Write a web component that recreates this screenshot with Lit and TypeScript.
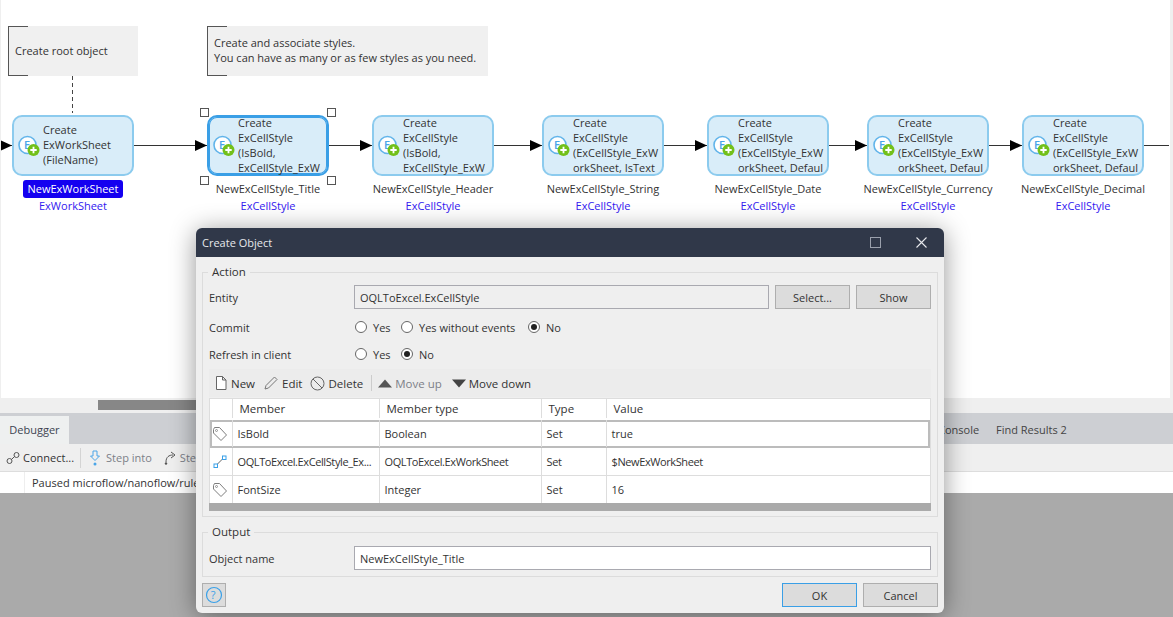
import { LitElement, html, css, svg } from "lit";
import { customElement } from "lit/decorators.js";

interface FlowNode { x: number; lines: string[]; name: string; type: string; }

const NODES: FlowNode[] = [
  { x: 12, lines: ["Create", "ExWorkSheet", "(FileName)"], name: "NewExWorkSheet", type: "ExWorkSheet" },
  { x: 207, lines: ["Create", "ExCellStyle", "(IsBold,", "ExCellStyle_ExW"], name: "NewExCellStyle_Title", type: "ExCellStyle" },
  { x: 372, lines: ["Create", "ExCellStyle", "(IsBold,", "ExCellStyle_ExW"], name: "NewExCellStyle_Header", type: "ExCellStyle" },
  { x: 542, lines: ["Create", "ExCellStyle", "(ExCellStyle_ExW", "orkSheet, IsText"], name: "NewExCellStyle_String", type: "ExCellStyle" },
  { x: 707, lines: ["Create", "ExCellStyle", "(ExCellStyle_ExW", "orkSheet, Defaul"], name: "NewExCellStyle_Date", type: "ExCellStyle" },
  { x: 867, lines: ["Create", "ExCellStyle", "(ExCellStyle_ExW", "orkSheet, Defaul"], name: "NewExCellStyle_Currency", type: "ExCellStyle" },
  { x: 1022, lines: ["Create", "ExCellStyle", "(ExCellStyle_ExW", "orkSheet, Defaul"], name: "NewExCellStyle_Decimal", type: "ExCellStyle" },
];

const FLOWS: [number, number][] = [[0, 12], [134, 207], [329, 372], [494, 542], [664, 707], [829, 867], [989, 1022], [1144, 1169]];

const tagIcon = html`<svg width="16" height="16" viewBox="0 0 16 16"><path d="M1.5 3.5 L2.5 1.5 L7.5 1.5 L14.5 9 L9 14.5 L1.5 7 Z" fill="none" stroke="#7d7d7d" stroke-width="1"/><circle cx="4.5" cy="4.5" r="1" fill="none" stroke="#7d7d7d" stroke-width=".8"/></svg>`;
const linkIcon = html`<svg width="16" height="16" viewBox="0 0 16 16"><path d="M4 11.5 L12 3.5" stroke="#666" stroke-width="1"/><rect x="2" y="10" width="3.5" height="3.5" fill="#fff" stroke="#39a0e8"/><rect x="10.5" y="2" width="3.5" height="3.5" fill="#fff" stroke="#39a0e8"/></svg>`;

const ROWS = [
  { icon: tagIcon, member: "IsBold", type: "Boolean", kind: "Set", value: "true", selected: true, long: false },
  { icon: linkIcon, member: "OQLToExcel.ExCellStyle_Ex...", type: "OQLToExcel.ExWorkSheet", kind: "Set", value: "$NewExWorkSheet", selected: false, long: true },
  { icon: tagIcon, member: "FontSize", type: "Integer", kind: "Set", value: "16", selected: false, long: false },
];

const radio = (label: string, checked = false, size = "") => html`
  <span class="radio ${size}"><span class="dot ${checked ? "on" : ""}"></span>${label}</span>`;

@customElement("app-root")
export class AppRoot extends LitElement {
  static styles = css`
    :host { display: block; width: 1173px; height: 617px; overflow: hidden; position: relative;
      font-family: "Open Sans", "Noto Sans", sans-serif; font-size: 11px; color: #333; background: #aaa; }
    * { box-sizing: border-box; }
    .page { display: flex; flex-direction: column; height: 617px; }
    .canvas-wrap { height: 413px; background: #efefef; display: flex; flex-direction: column; position: relative; }
    .canvas { position: relative; height: 398px; width: 1169px; margin-left: 1px; background: #fff; overflow: hidden; flex: none; }
    .hscroll { height: 15px; padding: 2px 0 3px 98px; }
    .thumb { height: 10px; width: 300px; background: #878787; }
    .wires { position: absolute; left: -1px; top: 0; }
    .note { position: absolute; top: 26px; height: 50px; background: #f0f0f0; display: flex; align-items: center; padding: 0 0 2px 7px; line-height: 15px; color: #333; }
    .note::before { content: ""; position: absolute; left: 0; top: 0; bottom: 0; width: 19px; border: 1px solid #555; border-right: 0; }
    .node { position: absolute; top: 115px; width: 122px; height: 61px; background: #d9edf9; border: 2px solid #8ccbee; border-radius: 10px; display: flex; align-items: center; }
    .node.sel { border-color: #3a9fe6; box-shadow: inset 0 0 0 1px #3a9fe6; }
    .node svg { position: absolute; left: 4px; top: 17px; }
    .node-text { margin-left: 29px; padding-bottom: 2px; line-height: 15px; width: 89px; white-space: nowrap; overflow: hidden; color: #333; }
    .label { position: absolute; width: 190px; text-align: center; top: 180px; line-height: 18px; color: #333; white-space: nowrap; }
    .label .name { display: inline-block; padding: 0 5px; height: 18px; }
    .label .name.hl { background: #1400f0; color: #fff; border-radius: 3px; }
    .label .type { color: #3320f0; line-height: 16px; }
    .handle { position: absolute; width: 9px; height: 9px; border: 1px solid #555; background: #fff; }
    .tabbar { height: 31px; background: #cdcfd3; display: flex; align-items: flex-end; color: #444; position: relative; }
    .tab { height: 28px; width: 69px; background: #eef0f0; display: flex; align-items: center; justify-content: center; padding-bottom: 2px; color: #3d4450; }
    .tab-right { position: absolute; top: 1px; height: 31px; display: flex; align-items: center; }
    .dbg-tools { height: 28px; background: #efefef; border-bottom: 1px solid #ddd; display: flex; align-items: center; padding-left: 6px; white-space: nowrap; }
    .dbg-tools svg { flex: none; }
    .dbg-tools .muted { color: #7c8088; }
    .dbg-sep { width: 1px; height: 20px; background: #d4d4d4; margin: 0 8px 0 6px; }
    .i-conn { margin-right: 2px; }
    .i-into { margin-right: 5px; }
    .i-over { margin: 0 2px 0 12px; }
    .status { height: 21px; background: #fff; display: flex; align-items: center; white-space: nowrap; }
    .status-cell { width: 25px; height: 100%; border-right: 1px solid #eee; flex: none; }
    .status span { margin-left: 7px; }
    .rest { flex: 1; background: #aaa; }

    .dialog { position: absolute; left: 196px; top: 228px; width: 748px; height: 385px; background: #efefef; border-radius: 6px; box-shadow: 0 3px 26px rgba(0,0,0,.42); display: flex; flex-direction: column; overflow: hidden; }
    .titlebar { height: 29px; flex: none; background: #303849; color: #e6e8ec; display: flex; align-items: center; padding-left: 6px; }
    .titlebar .title { flex: 1; }
    .titlebar svg { display: block; }
    .win-btn { width: 46px; display: flex; justify-content: center; }
    .body { flex: 1; display: flex; flex-direction: column; padding: 7px 6px 6px; }
    fieldset { margin: 0; border: 1px solid #dcdcdc; padding: 5px 6px 5px; min-width: 0; }
    legend { padding: 0 4px; margin-left: -1px; height: 16px; line-height: 16px; font-size: 11.5px; color: #333; }
    .form-row { display: flex; align-items: center; height: 24px; }
    .form-row + .form-row { margin-top: 6px; }
    .form-row.tight { margin-top: 3px; }
    .lbl { width: 145px; flex: none; }
    .radios { display: flex; padding-left: 1px; }
    .input { height: 24px; border: 1px solid #a9a9b0; padding-left: 5px; display: flex; align-items: center; flex: 1; background: #efefef; }
    .input.white { background: #fff; }
    .btn { width: 75px; height: 24px; flex: none; border: 1px solid #aeaeae; background: #dcdcdc; display: flex; align-items: center; justify-content: center; }
    .btn.gap { margin-left: 6px; }
    .btn.default { border-color: #3a9fe6; }
    .radio { display: inline-flex; align-items: center; }
    .radio.short { width: 46px; }
    .radio.wide { width: 127px; }
    .dot { width: 12px; height: 12px; border: 1px solid #666; border-radius: 50%; background: #fff; margin-right: 6px; position: relative; flex: none; }
    .dot.on::after { content: ""; position: absolute; left: 2px; top: 2px; width: 6px; height: 6px; background: #222; border-radius: 50%; }
    .list-tools { height: 28px; margin-top: 3px; background: #ececec; display: flex; align-items: center; padding: 0 0 0 5px; white-space: nowrap; font-size: 11.5px; }
    .tool { display: inline-flex; align-items: center; gap: 3px; margin-right: 8px; }
    .tool.muted { color: #7c8088; }
    .tool-down { margin-left: 2px; }
    .tool-sep { width: 1px; height: 16px; background: #ccc; margin: 0 6px 0 0; }
    .table { width: 722px; height: 113px; margin-top: 1px; background: #fff; border: 1px solid #ddd; border-bottom: 0; display: flex; flex-direction: column; }
    .tr { display: grid; grid-template-columns: 23px 147px 162px 65px 1fr; height: 28px; border-bottom: 1px solid #ddd; position: relative; }
    .tr.head { height: 21px; border-bottom: 0; padding-bottom: 2px; }
    .tr.sel { box-shadow: inset 0 0 0 2px #bcbcbc; border-bottom: 0; padding-bottom: 1px; }
    .tr.long { letter-spacing: -0.4px; }
    .tr > div { display: flex; align-items: center; padding-left: 4.5px; border-right: 1px solid #ddd; white-space: nowrap; overflow: hidden; }
    .tr.head > div { padding-left: 6.5px; font-size: 11.5px; }
    .tr > div:last-child { border-right: 0; }
    .tr > div.ic { padding-left: 2px; }
    .tbar { height: 8px; background: #aaa; flex: none; margin: -1px -1px 0; position: relative; }
    .output { margin-top: 7px; padding-top: 6px; padding-bottom: 6px; }
    .footer { display: flex; align-items: center; margin-top: 6px; }
    .help { width: 24px; height: 24px; border: 1px solid #aeaeae; background: #dcdcdc; display: flex; align-items: center; justify-content: center; margin-right: auto; }
  `;

  private icon() {
    return svg`<svg width="30" height="24" viewBox="0 0 30 24">
      <circle cx="9.5" cy="11" r="8.5" fill="#fff" stroke="#62b4ea" stroke-width="1.6"/>
      <text x="6" y="15" font-size="11" font-weight="600" fill="#4aa5e8" font-family="Open Sans">E</text>
      <circle cx="15.5" cy="16" r="6" fill="#72c01a"/>
      <path d="M15.5 12.8 V19.2 M12.3 16 H18.7" stroke="#fff" stroke-width="1.8"/>
    </svg>`;
  }

  render() {
    return html`
      <div class="page">
        <div class="canvas-wrap">
          <div class="canvas">
            <svg class="wires" width="1170" height="398">
              <path d="M72.5 76 V113" stroke="#444" stroke-dasharray="4 3" fill="none"/>
              ${FLOWS.map(([a, b]) => svg`
                <path d="M${a} 145.5 H${b}" stroke="#333" fill="none"/>
                ${a === 1144 ? "" : svg`<path d="M${b - 12} 140 L${b} 145.5 L${b - 12} 151 Z" fill="#000"/>`}
              `)}
            </svg>
            <div class="note" style="left:7px;width:130px">Create root object</div>
            <div class="note" style="left:206px;width:281px">Create and associate styles.<br />You can have as many or as few styles as you need.</div>
            ${NODES.map((n, i) => html`
              <div class="node ${i === 1 ? "sel" : ""}" style="left:${n.x - 1}px">
                ${this.icon()}
                <div class="node-text">${n.lines.map((l) => html`${l}<br />`)}</div>
              </div>
              <div class="label" style="left:${n.x - 1 + 61 - 95}px">
                <div><span class="name ${i === 0 ? "hl" : ""}">${n.name}</span></div>
                <div class="type">${n.type}</div>
              </div>
            `)}
            <div class="handle" style="left:199px;top:108px"></div>
            <div class="handle" style="left:326px;top:108px"></div>
            <div class="handle" style="left:199px;top:176px"></div>
            <div class="handle" style="left:326px;top:176px"></div>
          </div>
          <div class="hscroll"><div class="thumb"></div></div>
        </div>
        <div class="tabbar">
          <div class="tab">Debugger</div>
          <div class="tab-right" style="left:938px">Console</div>
          <div class="tab-right" style="left:996px">Find Results 2</div>
        </div>
        <div class="dbg-tools">
          <svg class="i-conn" width="15" height="14" viewBox="0 0 15 14"><circle cx="3.5" cy="10" r="2.5" fill="none" stroke="#555"/><circle cx="10.5" cy="4" r="2.5" fill="none" stroke="#555"/><path d="M5.5 8.5 L8.5 5.5" stroke="#555"/></svg>
          <span>Connect...</span>
          <span class="dbg-sep"></span>
          <svg class="i-into" width="12" height="16" viewBox="0 0 12 16"><path d="M4 1 H8 V6 H10.5 L6 10.5 L1.5 6 H4 Z" fill="none" stroke="#4aa5e8"/><circle cx="6" cy="14" r="1.5" fill="#4aa5e8"/></svg>
          <span class="muted">Step into</span>
          <svg class="i-over" width="14" height="14" viewBox="0 0 14 14"><path d="M2 11 C2 6 5 4 9 4 M7 1 L11 4 L7 7" fill="none" stroke="#555"/><circle cx="2" cy="12.5" r="1.2" fill="#555"/></svg>
          <span class="muted">Step over</span>
        </div>
        <div class="status"><div class="status-cell"></div><span>Paused microflow/nanoflow/rule</span></div>
        <div class="rest"></div>
      </div>

      <div class="dialog">
        <div class="titlebar">
          <span class="title">Create Object</span>
          <span class="win-btn"><svg width="11" height="11"><rect x=".5" y=".5" width="10" height="10" fill="none" stroke="#9aa0ac"/></svg></span>
          <span class="win-btn"><svg width="11" height="11"><path d="M.5 .5 L10.5 10.5 M10.5 .5 L.5 10.5" stroke="#e6e8ec" stroke-width="1.1"/></svg></span>
        </div>
        <div class="body">
          <fieldset>
            <legend>Action</legend>
            <div class="form-row">
              <span class="lbl">Entity</span>
              <div class="input">OQLToExcel.ExCellStyle</div>
              <div class="btn gap">Select...</div>
              <div class="btn gap">Show</div>
            </div>
            <div class="form-row"><span class="lbl">Commit</span><div class="radios">${radio("Yes", false, "short")}${radio("Yes without events", false, "wide")}${radio("No", true)}</div></div>
            <div class="form-row tight"><span class="lbl">Refresh in client</span><div class="radios">${radio("Yes", false, "short")}${radio("No", true)}</div></div>
            <div class="list-tools">
              <span class="tool"><svg width="14" height="16" viewBox="0 0 14 16"><path d="M2.5 1.5 H8.5 L12 5 V14.5 H2.5 Z M8.5 1.5 V5 H12" fill="#fff" stroke="#666"/></svg>New</span>
              <span class="tool"><svg width="16" height="16" viewBox="0 0 16 16"><path d="M2 14 L3 10.5 L11.5 2 L14 4.5 L5.5 13 Z" fill="none" stroke="#777"/></svg>Edit</span>
              <span class="tool"><svg width="15" height="15" viewBox="0 0 15 15"><circle cx="7.5" cy="7.5" r="6.5" fill="none" stroke="#666"/><path d="M3 3 L12 12" stroke="#666"/></svg>Delete</span>
              <span class="tool-sep"></span>
              <span class="tool muted"><svg width="14" height="9" viewBox="0 0 14 9"><path d="M0 8.5 L7 .5 L14 8.5 Z" fill="#555"/></svg>Move up</span>
              <span class="tool tool-down"><svg width="14" height="9" viewBox="0 0 14 9"><path d="M0 .5 L14 .5 L7 8.5 Z" fill="#444"/></svg>Move down</span>
            </div>
            <div class="table">
              <div class="tr head"><div></div><div>Member</div><div>Member type</div><div>Type</div><div>Value</div></div>
              ${ROWS.map((r) => html`
                <div class="tr ${r.selected ? "sel" : ""} ${r.long ? "long" : ""}">
                  <div class="ic">${r.icon}</div><div>${r.member}</div><div>${r.type}</div><div>${r.kind}</div><div>${r.value}</div>
                </div>`)}
              <div class="tbar"></div>
            </div>
          </fieldset>
          <fieldset class="output">
            <legend>Output</legend>
            <div class="form-row">
              <span class="lbl">Object name</span>
              <div class="input white">NewExCellStyle_Title</div>
            </div>
          </fieldset>
          <div class="footer">
            <div class="help"><svg width="18" height="18" viewBox="0 0 18 18"><circle cx="9" cy="9" r="7.5" fill="none" stroke="#39a0e8" stroke-width="1.2"/><text x="5.8" y="13" font-size="11" fill="#39a0e8" font-family="Open Sans">?</text></svg></div>
            <div class="btn default">OK</div>
            <div class="btn gap">Cancel</div>
          </div>
        </div>
      </div>
    `;
  }
}
